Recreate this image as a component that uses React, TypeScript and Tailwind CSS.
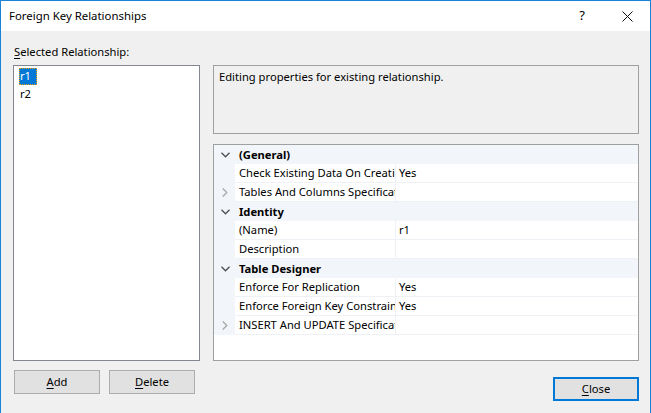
import React from "react";

const font = { fontFamily: '"Noto Sans", "Open Sans", sans-serif' };

function ChevDown() {
  return (
    <svg width="9" height="6" viewBox="0 0 9 6" className="block">
      <path d="M0.5 0.8 L4.5 4.8 L8.5 0.8" fill="none" stroke="#505050" strokeWidth="1.3" />
    </svg>
  );
}
function ChevRight() {
  return (
    <svg width="6" height="9" viewBox="0 0 6 9" className="block">
      <path d="M0.8 0.5 L4.8 4.5 L0.8 8.5" fill="none" stroke="#a8a8a8" strokeWidth="1.3" />
    </svg>
  );
}

type Row =
  | { kind: "cat"; label: string }
  | { kind: "prop"; label: string; value?: string; expandable?: boolean };

const rows: Row[] = [
  { kind: "cat", label: "(General)" },
  { kind: "prop", label: "Check Existing Data On Creation Or Re-Enabling", value: "Yes" },
  { kind: "prop", label: "Tables And Columns Specification", expandable: true },
  { kind: "cat", label: "Identity" },
  { kind: "prop", label: "(Name)", value: "r1" },
  { kind: "prop", label: "Description" },
  { kind: "cat", label: "Table Designer" },
  { kind: "prop", label: "Enforce For Replication", value: "Yes" },
  { kind: "prop", label: "Enforce Foreign Key Constraint", value: "Yes" },
  { kind: "prop", label: "INSERT And UPDATE Specification", expandable: true },
];

export default function App() {
  return (
    <div
      className="w-[651px] h-[413px] bg-[#f0f0f0] border-l border-t border-r border-[#1883d7] flex flex-col text-[11.2px] text-black overflow-hidden"
      style={font}
    >
      {/* Title bar */}
      <div className="h-[30px] bg-white flex items-center shrink-0">
        <div className="pl-[8px] text-[11.4px] leading-none flex-1">Foreign Key Relationships</div>
        <div className="w-[20px] text-center text-[13px] mr-[20px]">?</div>
        <div className="w-[30px] flex items-center justify-center mr-[8px]">
          <svg width="11" height="11" viewBox="0 0 11 11">
            <path d="M0.5 0.5 L10.5 10.5 M10.5 0.5 L0.5 10.5" stroke="#111" strokeWidth="1" />
          </svg>
        </div>
      </div>

      {/* Body */}
      <div className="flex pl-[12px] pr-[11px]">
        {/* Left column */}
        <div className="w-[187px] flex flex-col">
          <div className="h-[34px] pt-[13px] leading-[16px] pl-[1px]">
            <span className="underline underline-offset-2">S</span>elected Relationship:
          </div>
          <div className="h-[296px] bg-white border border-[#828790] pt-[2px] pl-[5px]">
            <div className="h-[17px] flex items-center">
              <span className="w-[18px] h-[17px] flex items-center pl-[1px] bg-[#0078d7] text-white outline outline-1 outline-dotted outline-[#f0a000] -outline-offset-1">
                r1
              </span>
            </div>
            <div className="h-[19px] flex items-center pl-[1px]">r2</div>
          </div>
          <div className="flex pt-[9px] pl-[1px] gap-[9px]">
            <button className="w-[86px] h-[24px] bg-[#e1e1e1] border border-[#adadad] text-[11.2px]" style={font}>
              <span className="underline underline-offset-2">A</span>dd
            </button>
            <button className="w-[86px] h-[24px] bg-[#e1e1e1] border border-[#adadad] text-[11.2px]" style={font}>
              <span className="underline underline-offset-2">D</span>elete
            </button>
          </div>
        </div>

        {/* Right column */}
        <div className="w-[426px] ml-[13px] flex flex-col">
          <div className="h-[34px]" />
          <div className="h-[69px] border border-[#a0a0a0] bg-[#f0f0f0] px-[5px] pt-[2px] leading-[18px]">
            Editing properties for existing relationship.
          </div>
          <div className="h-[217px] mt-[10px] border border-[#a0a0a0] bg-white flex flex-col">
            {rows.map((r, i) =>
              r.kind === "cat" ? (
                <div key={i} className="h-[19px] bg-[#f2f5fa] flex items-center">
                  <div className="w-[21px] flex justify-center pl-[1px]">
                    <ChevDown />
                  </div>
                  <div className="pl-[4px] font-bold leading-none">{r.label}</div>
                </div>
              ) : (
                <div key={i} className="h-[19px] flex bg-[#f2f5fa]">
                  <div className="w-[21px] flex items-center justify-center">
                    {r.expandable ? <ChevRight /> : null}
                  </div>
                  <div className="w-[160px] bg-white border-b border-[#eef1f6] pl-[4px] flex items-center overflow-hidden whitespace-nowrap">
                    {r.label}
                  </div>
                  <div className="w-[1px] bg-[#eef1f6]" />
                  <div className="flex-1 bg-white border-b border-[#eef1f6] pl-[3px] flex items-center">
                    {r.value ?? ""}
                  </div>
                </div>
              )
            )}
          </div>
          <div className="flex justify-end pt-[16px]">
            <button
              className="w-[86px] h-[24px] bg-[#e1e1e1] border-2 border-[#0078d7] text-[11.2px]"
              style={font}
            >
              <span className="underline underline-offset-2">C</span>lose
            </button>
          </div>
        </div>
      </div>
    </div>
  );
}
